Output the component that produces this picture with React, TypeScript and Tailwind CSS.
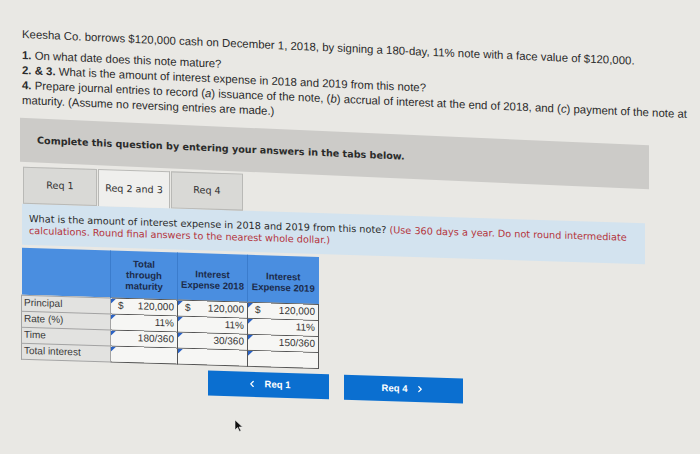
import { ChevronLeft, ChevronRight } from "lucide-react";

const cols = ["w-[89px]", "w-[67px]", "w-[70px]", "w-[71px]"];

type Cell = { dollar?: boolean; value: string };

const rows: { label: string; cells: Cell[] }[] = [
  {
    label: "Principal",
    cells: [
      { dollar: true, value: "120,000" },
      { dollar: true, value: "120,000" },
      { dollar: true, value: "120,000" },
    ],
  },
  { label: "Rate (%)", cells: [{ value: "11%" }, { value: "11%" }, { value: "11%" }] },
  { label: "Time", cells: [{ value: "180/360" }, { value: "30/360" }, { value: "150/360" }] },
  { label: "Total interest", cells: [{ value: "" }, { value: "" }, { value: "" }] },
];

function Marker() {
  return (
    <svg className="absolute left-0 top-0" width="5" height="5" viewBox="0 0 5 5">
      <path d="M0 0H5L0 5Z" fill="#2a62c4" />
    </svg>
  );
}

function Tab({ label, active, width }: { label: string; active?: boolean; width: string }) {
  return (
    <div
      className={
        active
          ? `${width} flex h-[37px] items-center justify-center border border-b-0 border-[#b9b9b6] bg-[#efefed]`
          : `${width} flex h-[37px] items-center justify-center border border-[#b9b9b6] bg-[#d9d9d6]`
      }
    >
      {label}
    </div>
  );
}

export default function App() {
  return (
    <div className="relative h-[454px] w-[700px] overflow-hidden bg-[#e9e8e4] text-[#2b2b2b]">
      {/* question text, photo is tilted so skew it */}
      <div className="origin-top-left skew-y-[2.5deg]">
        <div className="pl-[22px] pt-[26px] font-['Liberation_Sans',Arial,sans-serif] text-[11.4px] leading-[15px]">
          <p>
            Keesha Co. borrows $120,000 cash on December 1, 2018, by signing a 180-day, 11% note with a face
            value of $120,000.
          </p>
          <p className="mt-[6px]">
            <b>1.</b> On what date does this note mature?
          </p>
          <p>
            <b>2. &amp; 3.</b> What is the amount of interest expense in 2018 and 2019 from this note?
          </p>
          <p>
            <b>4.</b> Prepare journal entries to record (<i>a</i>) issuance of the note, (<i>b</i>) accrual of
            interest at the end of 2018, and (<i>c</i>) payment of the note at
            <br />
            maturity. (Assume no reversing entries are made.)
          </p>
        </div>
        <div className="ml-[20px] mt-[10px] flex h-[44px] w-[629px] items-center bg-[#cccbc8] pl-[17px] font-['DejaVu_Sans',sans-serif] text-[9.6px] font-bold">
          Complete this question by entering your answers in the tabs below.
        </div>
      </div>

      <div className="origin-top-left skew-y-[1.8deg]">
        <div className="ml-[23px] mt-[5px] flex gap-[1px] font-['DejaVu_Sans',sans-serif] text-[9.6px] text-[#333]">
          <Tab label="Req 1" width="w-[74px]" />
          <Tab label="Req 2 and 3" width="w-[72px]" active />
          <Tab label="Req 4" width="w-[72px]" />
        </div>

        <div className="ml-[22px] flex h-[41px] w-[623px] flex-col justify-center bg-[#d3e3ef] pl-[7px] font-['DejaVu_Sans',sans-serif] text-[9.7px] leading-[12px]">
          <p className="whitespace-nowrap">
            What is the amount of interest expense in 2018 and 2019 from this note?{" "}
            <span className="text-[#b3343c]">(Use 360 days a year. Do not round intermediate</span>
          </p>
          <p className="text-[#b3343c]">calculations. Round final answers to the nearest whole dollar.)</p>
        </div>

        <table className="ml-[21px] mt-[3px] table-fixed border-collapse font-['Liberation_Sans',Arial,sans-serif] text-[10px]">
          <thead>
            <tr className="bg-[#4a8ee0] text-[9.5px] font-bold leading-[11px] text-[#1c2b4a]">
              <th className={`${cols[0]} h-[47px]`} />
              <th className={`${cols[1]} border-l border-[#3b7ccc] align-middle`}>
                Total
                <br />
                through
                <br />
                maturity
              </th>
              <th className={`${cols[2]} border-l border-[#3b7ccc] pt-[6px] align-middle`}>
                Interest
                <br />
                Expense 2018
              </th>
              <th className={`${cols[3]} border-l border-[#3b7ccc] pt-[6px] align-middle`}>
                Interest
                <br />
                Expense 2019
              </th>
            </tr>
          </thead>
          <tbody>
            {rows.map((row) => (
              <tr key={row.label} className="h-[16px]">
                <td className="border border-[#a3a3a3] bg-[#e2e2e0] pl-[2px] leading-[14px] text-[#3a3a3a]">
                  {row.label}
                </td>
                {row.cells.map((cell, i) => (
                  <td key={i} className="relative border border-[#555] bg-[#f6f6f4] p-0 leading-[14px] text-[#333]">
                    <Marker />
                    <div className="flex justify-between pl-[7px] pr-[3px]">
                      <span>{cell.dollar ? "$" : ""}</span>
                      <span>{cell.value}</span>
                    </div>
                  </td>
                ))}
              </tr>
            ))}
          </tbody>
        </table>

        <div className="mt-[5px] flex gap-[15px] pl-[208px] font-['Liberation_Sans',Arial,sans-serif] text-[9.5px] font-bold text-white">
          <button className="flex h-[25px] w-[121px] items-center justify-center gap-[8px] bg-[#0b6fd0]">
            <ChevronLeft size={10} strokeWidth={3} />
            Req 1
          </button>
          <button className="flex h-[25px] w-[119px] items-center justify-center gap-[8px] bg-[#0b6fd0]">
            Req 4
            <ChevronRight size={10} strokeWidth={3} />
          </button>
        </div>
      </div>

      {/* mouse pointer */}
      <svg className="absolute left-[234px] top-[419px]" width="9" height="13" viewBox="0 0 9 13">
        <path d="M1 1V11L3.5 8.5L5.5 12.5L7 11.8L5 8H8.5Z" fill="#111" stroke="#eee" strokeWidth="0.6" />
      </svg>
    </div>
  );
}
